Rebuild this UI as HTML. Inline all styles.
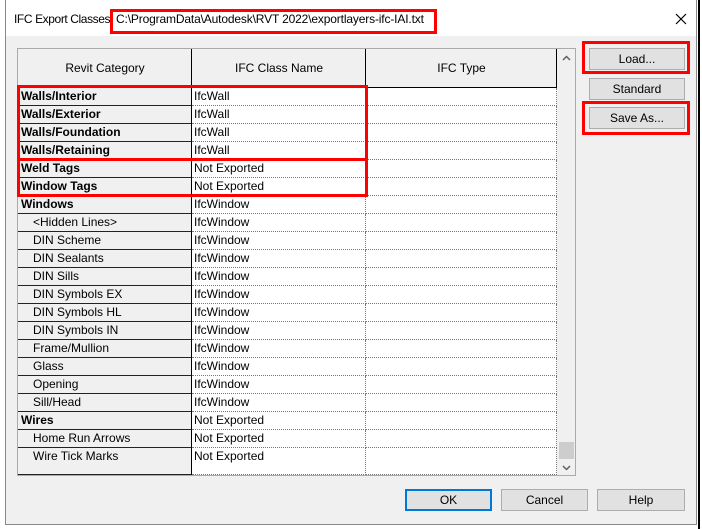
<!DOCTYPE html>
<html><head><meta charset="utf-8"><style>
*{margin:0;padding:0;box-sizing:border-box}
body{width:702px;height:529px;position:relative;overflow:hidden;background:#fff;font-family:"Liberation Sans",sans-serif;font-size:12px;color:#000}
.a{position:absolute}
.dlg{left:5px;top:-1px;width:692px;height:526px;background:#f0f0f0;border:1px solid #888}
.title{left:6px;top:0;width:690px;height:36px;background:#fff}
.btn{position:absolute;background:#e1e1e1;border:1px solid #adadad;text-align:center;line-height:20px;font-size:12px}
.red{position:absolute;border:3px solid #f00}
.r{position:absolute;left:18px;height:18px;width:539px}
.c1{position:absolute;left:0;top:0;width:174px;height:100%;background:#f0f0f0;border-bottom:1px solid #222;border-right:1px solid #000;padding-left:3px;line-height:17px;white-space:nowrap}
.c2{position:absolute;left:174px;top:0;width:174px;height:100%;background:#fff;border-bottom:1px dotted #777;border-right:1px dotted #777;padding-left:2px;line-height:17px}
.c3{position:absolute;left:348px;top:0;width:191px;height:100%;background:#fff;border-bottom:1px dotted #777;border-right:1px dotted #777}
b{font-weight:bold}
</style></head><body>
<div class="a" style="left:698px;top:0;width:2px;height:529px;background:#000"></div>
<div class="a dlg"></div>
<div class="a title"></div>
<div class="a" style="left:14px;top:12px;letter-spacing:-0.4px">IFC Export Classes:</div>
<div class="a" style="left:116px;top:12px;letter-spacing:-0.15px">C:\ProgramData\Autodesk\RVT 2022\exportlayers-ifc-IAI.txt</div>
<svg class="a" style="left:675px;top:13px" width="12" height="12"><path d="M1 1L11 11M11 1L1 11" stroke="#000" stroke-width="1.2"/></svg>
<div class="red" style="left:110px;top:9px;width:327px;height:25px"></div>

<div class="a" style="left:17px;top:48px;width:559px;height:428px;background:#f0f0f0;border:1px solid #aaa"></div>
<div class="a" style="left:18px;top:49px;width:539px;height:39px;border-bottom:1px solid #000;border-right:1px solid #000;background:#f0f0f0"></div>
<div class="a" style="left:191px;top:49px;width:1px;height:39px;background:#000"></div>
<div class="a" style="left:365px;top:49px;width:1px;height:39px;background:#000"></div>
<div class="a" style="left:18px;top:61px;width:174px;text-align:center">Revit Category</div>
<div class="a" style="left:192px;top:61px;width:174px;text-align:center">IFC Class Name</div>
<div class="a" style="left:366px;top:61px;width:191px;text-align:center">IFC Type</div>
<svg class="a" style="left:562px;top:55px" width="9" height="6"><path d="M1 5L4.5 1.5L8 5" stroke="#606060" stroke-width="1.5" fill="none"/></svg>
<div class="a" style="left:559px;top:442px;width:15px;height:17px;background:#cdcdcd"></div>
<svg class="a" style="left:562px;top:465px" width="9" height="6"><path d="M1 1L4.5 4.5L8 1" stroke="#606060" stroke-width="1.5" fill="none"/></svg>

<div id="rows"></div>
<script>
var R=[["Walls/Interior",1,"IfcWall"],["Walls/Exterior",1,"IfcWall"],["Walls/Foundation",1,"IfcWall"],["Walls/Retaining",1,"IfcWall"],["Weld Tags",1,"Not Exported"],["Window Tags",1,"Not Exported"],["Windows",1,"IfcWindow"],["&lt;Hidden Lines&gt;",0,"IfcWindow"],["DIN Scheme",0,"IfcWindow"],["DIN Sealants",0,"IfcWindow"],["DIN Sills",0,"IfcWindow"],["DIN Symbols EX",0,"IfcWindow"],["DIN Symbols HL",0,"IfcWindow"],["DIN Symbols IN",0,"IfcWindow"],["Frame/Mullion",0,"IfcWindow"],["Glass",0,"IfcWindow"],["Opening",0,"IfcWindow"],["Sill/Head",0,"IfcWindow"],["Wires",1,"Not Exported"],["Home Run Arrows",0,"Not Exported"],["Wire Tick Marks",0,"Not Exported"]];
var h="";R.forEach(function(r,i){var t=88+18*i,ht=i==20?27:18;h+='<div class="r" style="top:'+t+'px;height:'+ht+'px"><div class="c1" style="padding-left:'+(r[1]?3:15)+'px">'+(r[1]?'<b>'+r[0]+'</b>':r[0])+'</div><div class="c2">'+r[2]+'</div><div class="c3"></div></div>';});
document.getElementById("rows").innerHTML=h;
</script>
<div class="red" style="left:17px;top:85px;width:351px;height:76px"></div>
<div class="red" style="left:17px;top:158px;width:351px;height:39px"></div>

<div class="btn" style="left:589px;top:48px;width:96px;height:22px">Load...</div>
<div class="btn" style="left:589px;top:78px;width:96px;height:22px">Standard</div>
<div class="btn" style="left:589px;top:107px;width:96px;height:22px">Save As...</div>
<div class="red" style="left:582px;top:41px;width:108px;height:33px"></div>
<div class="red" style="left:582px;top:101px;width:108px;height:34px"></div>

<div class="btn" style="left:405px;top:489px;width:87px;height:22px;border:2px solid #0078d7;line-height:18px">OK</div>
<div class="btn" style="left:501px;top:489px;width:87px;height:22px">Cancel</div>
<div class="btn" style="left:597px;top:489px;width:88px;height:22px">Help</div>
</body></html>
